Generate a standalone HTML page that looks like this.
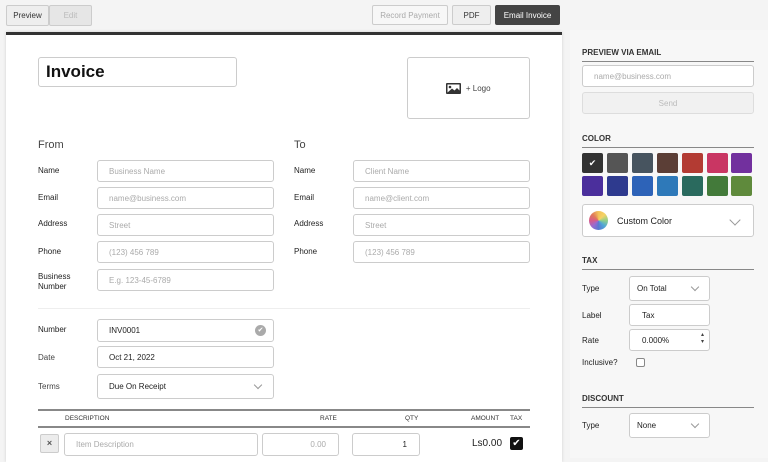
<!DOCTYPE html>
<html><head><meta charset="utf-8"><style>
*{box-sizing:border-box;margin:0;padding:0}
body{width:768px;height:458px;overflow:hidden;background:#f4f4f4;font-family:"Liberation Sans",sans-serif;position:relative;font-size:8px;color:#333}
.a{position:absolute}
.btn{position:absolute;border:1px solid #ccc;border-radius:2px;background:#ececec;font-size:8px;text-align:center;line-height:19px;color:#333}
.in{position:absolute;border:1px solid #ccc;border-radius:3px;background:#fff;font-size:8px;color:#aaa;padding-left:11px;display:flex;align-items:center}
.lb{position:absolute;font-size:8px;color:#222}
.chev{position:absolute;width:6px;height:6px;border-right:1px solid #999;border-bottom:1px solid #999;transform:rotate(45deg)}
.h{position:absolute;font-size:8px;font-weight:bold;color:#333}
.line{position:absolute;height:2px;background:#888}
.sw{position:absolute;width:21px;height:20px;border-radius:2px}
</style></head><body>
<div class="btn" style="left:6px;top:5px;width:43px;height:21px;background:#eee;color:#333">Preview</div>
<div class="btn" style="left:49px;top:5px;width:43px;height:21px;background:#e6e6e6;color:#bbb">Edit</div>
<div class="btn" style="left:372px;top:5px;width:76px;height:20px;background:#f7f7f7;color:#aaa">Record Payment</div>
<div class="btn" style="left:452px;top:5px;width:39px;height:20px;background:#eee">PDF</div>
<div class="btn" style="left:495px;top:5px;width:65px;height:20px;background:#444;color:#fff;border-color:#444">Email Invoice</div>

<div class="a" style="left:6px;top:32px;width:556px;height:430px;background:#fff;border-top:3px solid #333;box-shadow:0 0 3px rgba(0,0,0,.15)"></div>
<div class="a" style="left:570px;top:30px;width:198px;height:428px;background:#f7f7f7"></div>

<div class="in" style="left:38px;top:57px;width:199px;height:30px;color:#111;font-size:17px;font-weight:bold;padding-left:7px">Invoice</div>
<div class="in" style="left:407px;top:57px;width:123px;height:62px;justify-content:center;padding:0;color:#444">
<svg width="15" height="11" viewBox="0 0 15 11"><rect width="15" height="11" rx="1" fill="#333"/><rect x="1.5" y="1.5" width="12" height="8" fill="#fff"/><circle cx="4" cy="4" r="1.3" fill="#333"/><path d="M1.5 9.5L6 5.5 8.5 7.5 11 5 13.5 7.5V9.5Z" fill="#333"/></svg>&nbsp; + Logo</div>

<div class="a" style="left:38px;top:139px;font-size:11px;color:#444">From</div>
<div class="a" style="left:294px;top:139px;font-size:11px;color:#444">To</div>

<div class="lb" style="left:38px;top:166px">Name</div><div class="in" style="left:97px;top:160px;width:177px;height:22px">Business Name</div>
<div class="lb" style="left:38px;top:193px">Email</div><div class="in" style="left:97px;top:187px;width:177px;height:22px">name@business.com</div>
<div class="lb" style="left:38px;top:219px">Address</div><div class="in" style="left:97px;top:214px;width:177px;height:22px">Street</div>
<div class="lb" style="left:38px;top:247px">Phone</div><div class="in" style="left:97px;top:241px;width:177px;height:22px">(123) 456 789</div>
<div class="lb" style="left:38px;top:272px;line-height:10px">Business<br>Number</div><div class="in" style="left:97px;top:269px;width:177px;height:22px">E.g. 123-45-6789</div>

<div class="lb" style="left:294px;top:166px">Name</div><div class="in" style="left:353px;top:160px;width:177px;height:22px">Client Name</div>
<div class="lb" style="left:294px;top:193px">Email</div><div class="in" style="left:353px;top:187px;width:177px;height:22px">name@client.com</div>
<div class="lb" style="left:294px;top:219px">Address</div><div class="in" style="left:353px;top:214px;width:177px;height:22px">Street</div>
<div class="lb" style="left:294px;top:247px">Phone</div><div class="in" style="left:353px;top:241px;width:177px;height:22px">(123) 456 789</div>

<div class="a" style="left:38px;top:308px;width:492px;height:1px;background:#eee"></div>

<div class="lb" style="left:38px;top:325px">Number</div><div class="in" style="left:97px;top:319px;width:177px;height:23px;color:#222">INV0001<div class="a" style="right:7px;top:5px;width:11px;height:11px;border-radius:50%;background:#aaa;color:#fff;font-size:7px;text-align:center;line-height:11px">✔</div></div>
<div class="lb" style="left:38px;top:353px;color:#444">Date</div><div class="in" style="left:97px;top:346px;width:177px;height:22px;color:#222">Oct 21, 2022</div>
<div class="lb" style="left:38px;top:382px;color:#444">Terms</div><div class="in" style="left:97px;top:374px;width:177px;height:25px;color:#222">Due On Receipt<div class="chev" style="right:12px;top:7px"></div></div>

<div class="a" style="left:38px;top:409px;width:492px;height:2px;background:#888"></div>
<div class="a" style="left:38px;top:426px;width:492px;height:2px;background:#888"></div>
<div class="a" style="left:65px;top:415px;font-size:6.5px;color:#333">DESCRIPTION</div>
<div class="a" style="left:320px;top:415px;font-size:6.5px;color:#333">RATE</div>
<div class="a" style="left:405px;top:415px;font-size:6.5px;color:#333">QTY</div>
<div class="a" style="left:471px;top:415px;font-size:6.5px;color:#333">AMOUNT</div>
<div class="a" style="left:510px;top:415px;font-size:6.5px;color:#333">TAX</div>
<div class="btn" style="left:40px;top:434px;width:19px;height:19px;line-height:17px;font-size:9px;font-weight:bold;color:#555">×</div>
<div class="in" style="left:64px;top:433px;width:194px;height:23px">Item Description</div>
<div class="in" style="left:262px;top:433px;width:77px;height:23px;justify-content:flex-end;padding-right:12px">0.00</div>
<div class="in" style="left:352px;top:433px;width:68px;height:23px;justify-content:flex-end;padding-right:12px;color:#222">1</div>
<div class="a" style="left:472px;top:438px;font-size:10px;color:#222">Ls0.00</div>
<div class="a" style="left:510px;top:437px;width:13px;height:13px;background:#111;border-radius:2px;color:#fff;font-size:10px;line-height:13px;text-align:center">✔</div>

<!-- right panel -->
<div class="h" style="left:582px;top:48px">PREVIEW VIA EMAIL</div>
<div class="line" style="left:582px;top:61px;width:172px;height:1px;background:#888"></div>
<div class="in" style="left:582px;top:65px;width:172px;height:22px;padding-left:11px">name@business.com</div>
<div class="in" style="left:582px;top:92px;width:172px;height:22px;justify-content:center;padding:0;background:#f1f1f1;color:#bbb;border-color:#ddd">Send</div>
<div class="h" style="left:582px;top:134px">COLOR</div>
<div class="line" style="left:582px;top:147px;width:172px;height:1px;background:#888"></div>
<div class="sw" style="left:582px;top:153px;background:#333;color:#fff;font-size:9px;text-align:center;line-height:20px">✔</div>
<div class="sw" style="left:607px;top:153px;background:#555"></div>
<div class="sw" style="left:632px;top:153px;background:#47545f"></div>
<div class="sw" style="left:657px;top:153px;background:#5b3e36"></div>
<div class="sw" style="left:682px;top:153px;background:#b33b33"></div>
<div class="sw" style="left:707px;top:153px;background:#c93663"></div>
<div class="sw" style="left:731px;top:153px;background:#72309e"></div>
<div class="sw" style="left:582px;top:176px;background:#4b2f9c"></div>
<div class="sw" style="left:607px;top:176px;background:#2e3a8e"></div>
<div class="sw" style="left:632px;top:176px;background:#2d63b8"></div>
<div class="sw" style="left:657px;top:176px;background:#2e79b9"></div>
<div class="sw" style="left:682px;top:176px;background:#2a6a5e"></div>
<div class="sw" style="left:707px;top:176px;background:#437a3a"></div>
<div class="sw" style="left:731px;top:176px;background:#5f8a3c"></div>
<div class="in" style="left:582px;top:204px;width:172px;height:33px;color:#222;font-size:9px;padding-left:6px">
<div style="width:19px;height:19px;border-radius:50%;background:conic-gradient(#f2c35a,#f6d365,#8fcf8a,#4fa6d8,#5a78d0,#9a6ad0,#d85a8a,#e07a5a,#f2c35a);margin-right:9px"></div>Custom Color<div class="chev" style="right:14px;top:11px;width:8px;height:8px"></div></div>

<div class="h" style="left:582px;top:256px">TAX</div>
<div class="line" style="left:582px;top:269px;width:172px;height:1px;background:#888"></div>
<div class="lb" style="left:582px;top:284px">Type</div><div class="in" style="left:629px;top:276px;width:81px;height:25px;color:#222;padding-left:7px">On Total<div class="chev" style="right:11px;top:7px"></div></div>
<div class="lb" style="left:582px;top:311px">Label</div><div class="in" style="left:629px;top:304px;width:81px;height:22px;color:#222;padding-left:12px">Tax</div>
<div class="lb" style="left:582px;top:336px">Rate</div><div class="in" style="left:629px;top:329px;width:81px;height:22px;color:#222;padding-left:12px">0.000%<span class="a" style="right:5px;top:2px;font-size:6px;line-height:7px;color:#444">▴<br>▾</span></div>
<div class="lb" style="left:582px;top:358px">Inclusive?</div><div class="a" style="left:636px;top:358px;width:9px;height:9px;border:1px solid #888;border-radius:2px;background:#fff"></div>
<div class="h" style="left:582px;top:394px">DISCOUNT</div>
<div class="line" style="left:582px;top:407px;width:172px;height:1px;background:#888"></div>
<div class="lb" style="left:582px;top:421px">Type</div><div class="in" style="left:629px;top:413px;width:81px;height:25px;color:#222;padding-left:7px">None<div class="chev" style="right:11px;top:7px"></div></div>
</body></html>
